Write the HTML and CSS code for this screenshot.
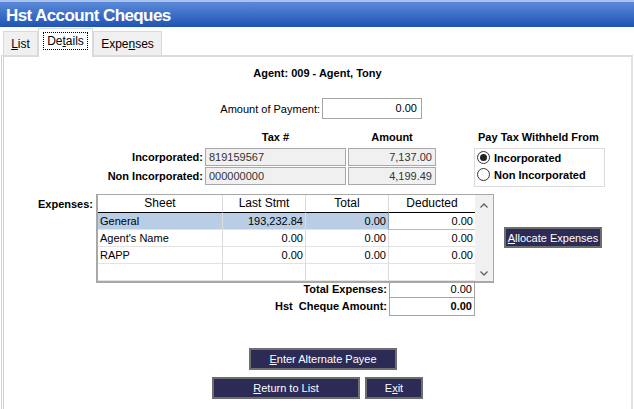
FILE: index.html
```html
<!DOCTYPE html>
<html lang="en">
<head>
    <meta charset="UTF-8">
    <title>Hst Account Cheques</title>
    <link rel="stylesheet" href="styles.css">
</head>
<body>
    <div class="titlebar">Hst Account Cheques</div>

    <div class="tabs">
        <div class="tab tab-list"><u>L</u>ist</div>
        <div class="tab tab-details"><span class="focus">De<u>t</u>ails</span></div>
        <div class="tab tab-expenses">Expe<u>n</u>ses</div>
    </div>

    <div class="panel">
        <div class="agent">Agent: 009 - Agent, Tony</div>

        <div class="pay-row">
            <label>Amount of Payment:</label>
            <div class="field">0.00</div>
        </div>

        <!-- tax numbers and amounts -->
        <div class="tax-grid">
            <div></div>
            <div class="head w-tax">Tax #</div>
            <div class="head w-amt">Amount</div>
            <div class="head pay-head">Pay Tax Withheld From</div>

            <label class="tax-label">Incorporated:</label>
            <div class="ro w-tax">819159567</div>
            <div class="ro w-amt num">7,137.00</div>
            <div class="radio-box">
                <div class="radio-item"><span class="radio checked"></span>Incorporated</div>
                <div class="radio-item"><span class="radio"></span>Non Incorporated</div>
            </div>

            <label class="tax-label">Non Incorporated:</label>
            <div class="ro w-tax">000000000</div>
            <div class="ro w-amt num">4,199.49</div>
        </div>

        <!-- expenses grid -->
        <div class="exp-row">
            <div class="exp-label">Expenses:</div>
            <div class="sheet-wrap">
                <div class="sheet">
                    <div class="hd">Sheet</div>
                    <div class="hd">Last Stmt</div>
                    <div class="hd">Total</div>
                    <div class="hd last">Deducted</div>

                    <div class="cell sel">General</div>
                    <div class="cell sel num">193,232.84</div>
                    <div class="cell sel num">0.00</div>
                    <div class="cell last num edit">0.00</div>

                    <div class="cell">Agent's Name</div>
                    <div class="cell num">0.00</div>
                    <div class="cell num">0.00</div>
                    <div class="cell last num">0.00</div>

                    <div class="cell">RAPP</div>
                    <div class="cell num">0.00</div>
                    <div class="cell num">0.00</div>
                    <div class="cell last num">0.00</div>

                    <div class="cell"></div>
                    <div class="cell"></div>
                    <div class="cell"></div>
                    <div class="cell last"></div>
                </div>
                <div class="scroll">
                    <svg width="8" height="5" viewBox="0 0 8 5"><path d="M0.5 4.5 L4 1 L7.5 4.5" fill="none" stroke="#606060" stroke-width="1.3"/></svg>
                    <svg width="8" height="5" viewBox="0 0 8 5"><path d="M0.5 0.5 L4 4 L7.5 0.5" fill="none" stroke="#606060" stroke-width="1.3"/></svg>
                </div>
            </div>
            <button class="btn btn-alloc"><u>A</u>llocate Expenses</button>
        </div>

        <div class="totals">
            <div class="tot-label">Total Expenses:</div>
            <div class="tot-box">0.00</div>
            <div class="tot-label">Hst&nbsp; Cheque Amount:</div>
            <div class="tot-box second">0.00</div>
        </div>

        <div class="actions">
            <button class="btn btn-payee"><u>E</u>nter Alternate Payee</button>
            <div class="action-row">
                <button class="btn btn-return"><u>R</u>eturn to List</button>
                <button class="btn btn-exit">E<u>x</u>it</button>
            </div>
        </div>
    </div>
</body>
</html>
```

FILE: styles.css
```css
body {
    margin: 0;
    width: 634px;
    height: 409px;
    overflow: hidden;
    font-family: "Liberation Sans", Arial, sans-serif;
    font-size: 11px;
    color: #000;
    background: #fff;
}
.titlebar {
    height: 27px;
    box-sizing: border-box;
    padding: 4px 0 0 6px;
    border-top: 2px solid #a9c3ec;
    background: linear-gradient(#5b8ad9, #1d53b4);
    color: #fff;
    font-size: 17px;
    font-weight: bold;
    letter-spacing: -0.6px;
    line-height: 20px;
}

/* tabs */
.tabs {
    display: flex;
    align-items: flex-end;
    height: 27px;
    margin-top: 1px;
    padding-left: 3px;
    font-size: 12px;
}
.tab {
    box-sizing: border-box;
    height: 24px;
    border: 1px solid #d9d9d9;
    border-bottom: none;
    background: #f0f0f0;
    display: flex;
    align-items: center;
    justify-content: center;
}
.tab-list {
    width: 35px;
}
.tab-details {
    width: 55px;
    height: 29px;
    margin-bottom: -2px;
    align-items: flex-start;
    padding-top: 3px;
    background: #fff;
    position: relative;
    z-index: 1;
}
.tab-expenses {
    width: 69px;
}
.focus {
    border: 1px dotted #000;
    padding: 0 3px;
    line-height: 16px;
}

/* panel */
.panel {
    margin-left: 1px;
    width: 632px;
    height: 354px;
    box-sizing: border-box;
    border-top: 2px solid #dcdcdc;
    border-left: 3px double #c4d4ea;
    border-right: 2px solid #e2e2e2;
}
.agent {
    margin-top: 9px;
    text-align: center;
    font-weight: bold;
    line-height: 14px;
}
.pay-row {
    display: flex;
    align-items: center;
    margin-top: 18px;
}
.pay-row label {
    width: 316px;
    text-align: right;
}
.field {
    margin-left: 2px;
    width: 100px;
    height: 21px;
    box-sizing: border-box;
    border: 1px solid #a5a5a5;
    padding-right: 4px;
    text-align: right;
    line-height: 19px;
}

.tax-grid {
    display: grid;
    grid-template-columns: 201px 143px 126px 131px;
    grid-template-rows: 18px 19px 19px;
    margin-top: 11px;
}
.head {
    font-weight: bold;
    text-align: center;
    line-height: 14px;
}
.pay-head {
    text-align: left;
    padding-left: 4px;
}
.w-tax {
    width: 141px;
}
.w-amt {
    width: 88px;
}
.tax-label {
    font-weight: bold;
    text-align: right;
    padding-right: 2px;
    line-height: 18px;
}
.ro {
    height: 18px;
    box-sizing: border-box;
    border: 1px solid #a9a9a9;
    background: #f0f0f0;
    color: #333;
    padding: 0 3px;
    line-height: 16px;
}
.num {
    text-align: right;
}
.radio-box {
    grid-column: 4;
    grid-row: 2 / span 2;
    align-self: start;
    height: 39px;
    box-sizing: border-box;
    border: 1px solid #dcdcdc;
    padding: 0 0 0 2px;
    font-weight: bold;
}
.radio-item {
    display: flex;
    align-items: center;
    height: 17px;
}
.radio {
    width: 13px;
    height: 13px;
    box-sizing: border-box;
    border: 1px solid #333;
    border-radius: 50%;
    margin-right: 4px;
    display: flex;
    align-items: center;
    justify-content: center;
}
.radio.checked::after {
    content: "";
    width: 7px;
    height: 7px;
    border-radius: 50%;
    background: #222;
}

/* expenses */
.exp-row {
    display: flex;
    align-items: flex-start;
    margin-top: 8px;
}
.exp-label {
    width: 89px;
    text-align: right;
    font-weight: bold;
    line-height: 18px;
    margin-top: 1px;
}
.sheet-wrap {
    display: flex;
    margin-left: 3px;
    border: 2px solid #a8a8a8;
    border-top-width: 1px;
    border-right-width: 1px;
}
.sheet {
    display: grid;
    grid-template-columns: 125px 83px 83px 86px;
    grid-template-rows: 18px repeat(4, 17px);
}
.hd {
    box-sizing: border-box;
    border-right: 1px solid #dcdcdc;
    border-bottom: 1px solid #000;
    text-align: center;
    font-size: 12px;
    line-height: 17px;
}
.cell {
    box-sizing: border-box;
    border-right: 1px solid #dcdcdc;
    border-bottom: 1px solid #e3e3e3;
    padding: 0 2px;
    line-height: 16px;
    white-space: nowrap;
}
.hd.last,
.cell.last {
    border-right: none;
}
.cell.sel {
    background: #b9cde5;
}
.cell.edit {
    border-left: 1px solid #8aa0c4;
    border-bottom-color: #a9bedf;
    margin-left: -1px;
}
.scroll {
    width: 18px;
    background: #f0f0f0;
    display: flex;
    flex-direction: column;
    align-items: center;
    justify-content: space-between;
    padding: 8px 0 5px;
    box-sizing: border-box;
}
.scroll svg {
    display: block;
}

.btn {
    box-sizing: border-box;
    border: 2px solid #6e6e6e;
    background: #2b2b56;
    color: #fff;
    font-family: "Liberation Sans", Arial, sans-serif;
    font-size: 11px;
    padding: 0;
    cursor: pointer;
}
.btn-alloc {
    margin-left: 10px;
    margin-top: 33px;
    width: 98px;
    height: 21px;
}

.totals {
    display: grid;
    grid-template-columns: 383px 86px;
    grid-template-rows: 17px 18px;
    column-gap: 2px;
    margin-top: -2px;
    position: relative;
}
.tot-label {
    text-align: right;
    font-weight: bold;
    line-height: 17px;
}
.tot-box {
    box-sizing: border-box;
    border: 1px solid #a5a5a5;
    padding-right: 2px;
    text-align: right;
    line-height: 15px;
}
.tot-box.second {
    border-top: none;
    font-weight: bold;
    line-height: 17px;
}

.actions {
    margin-top: 32px;
}
.btn-payee {
    display: block;
    margin-left: 245px;
    width: 148px;
    height: 22px;
}
.action-row {
    display: flex;
    gap: 5px;
    margin-top: 7px;
    margin-left: 208px;
}
.btn-return {
    width: 148px;
    height: 22px;
}
.btn-exit {
    width: 58px;
    height: 22px;
}
```
